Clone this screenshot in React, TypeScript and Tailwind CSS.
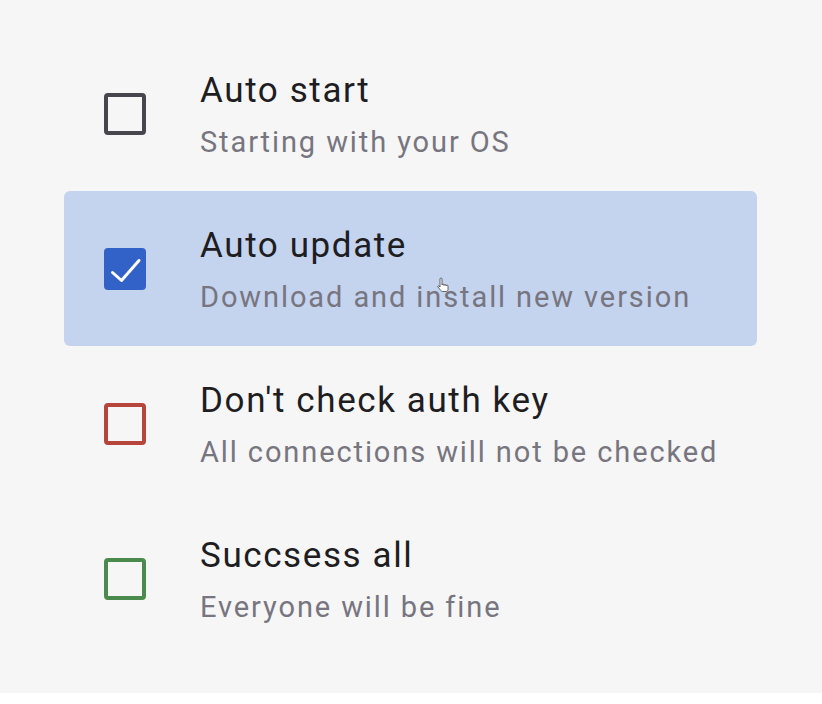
import React from "react";

type Item = {
  title: string;
  subtitle: string;
  checked?: boolean;
  border: string;
  active?: boolean;
};

const items: Item[] = [
  { title: "Auto start", subtitle: "Starting with your OS", border: "border-[#47454e]" },
  { title: "Auto update", subtitle: "Download and install new version", checked: true, border: "border-[#3262c8]", active: true },
  { title: "Don't check auth key", subtitle: "All connections will not be checked", border: "border-[#b7453b]" },
  { title: "Succsess all", subtitle: "Everyone will be fine", border: "border-[#4a8a4c]" },
];

function Box({ item }: { item: Item }) {
  if (item.checked) {
    return (
      <div className="w-[42px] h-[42px] rounded-[4px] bg-[#3262c8] shrink-0">
        <svg width="42" height="42" viewBox="0 0 42 42" fill="none">
          <path d="M8.5 24.5l9 8L35 12.5" stroke="white" strokeWidth="3" strokeLinecap="round" strokeLinejoin="round" />
        </svg>
      </div>
    );
  }
  return <div className={`w-[42px] h-[42px] rounded-[4px] border-[4px] ${item.border} shrink-0`} />;
}

export default function App() {
  return (
    <div className="bg-white min-h-[704px]" style={{ fontFamily: "Roboto, 'Noto Sans', sans-serif" }}>
      <div className="bg-[#f6f6f6] h-[693px] pt-[36px] pl-[64px] pr-[65px]">
        {items.map((item) => (
          <div
            key={item.title}
            className={`relative h-[155px] flex items-center pl-[40px] rounded-[6px] ${item.active ? "bg-[#c4d3ee]" : ""}`}
          >
            <Box item={item} />
            <div className="ml-[54px] flex flex-col">
              <div className="text-[35px] leading-[56px] text-[#1e1d22] tracking-[1.6px]">{item.title}</div>
              <div className="text-[29px] leading-[46px] text-[#77757f] tracking-[1.9px]">{item.subtitle}</div>
            </div>
            {item.active && (
              <svg className="absolute left-[373px] top-[86px]" width="12" height="17" viewBox="0 0 12 16">
                <path d="M3 1.5v8l-1-1c-.8-.6-1.6.3-1 1l2.8 3.5c.4.6 1 1 1.8 1H9c1.2 0 2-1 2-2V8.5c0-.6-.5-1-1-1s-1 .4-1 1V8c0-.6-.5-1-1-1s-1 .4-1 1v-.5c0-.6-.5-1-1-1s-1 .4-1 1V1.5c0-.6-.4-1-1-1s-1 .4-1 1z" fill="white" stroke="#444" strokeWidth="0.8" />
              </svg>
            )}
          </div>
        ))}
      </div>
    </div>
  );
}
